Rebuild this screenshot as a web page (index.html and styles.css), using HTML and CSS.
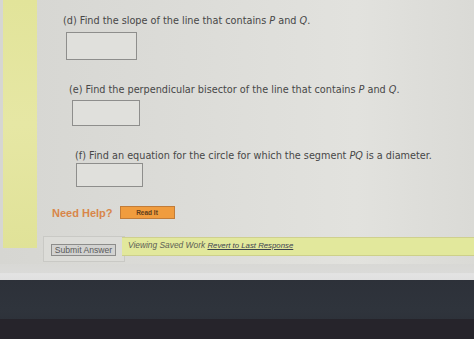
FILE: index.html
```html
<!DOCTYPE html>
<html>
<head>
<meta charset="utf-8">
<link rel="stylesheet" href="styles.css">
</head>
<body>
<div class="screen">
  <div class="upper">
    <div class="sidebar"></div>
    <div class="content">
      <div class="question q-d">
        <p class="prompt">(d) Find the slope of the line that contains <i>P</i> and <i>Q</i>.</p>
        <div class="answer a-d"></div>
      </div>
      <div class="question q-e">
        <p class="prompt">(e) Find the perpendicular bisector of the line that contains <i>P</i> and <i>Q</i>.</p>
        <div class="answer a-e"></div>
      </div>
      <div class="question q-f">
        <p class="prompt">(f) Find an equation for the circle for which the segment <i>PQ</i> is a diameter.</p>
        <div class="answer a-f"></div>
      </div>
      <div class="help">
        <span class="help-label">Need Help?</span>
        <span class="read-btn">Read It</span>
      </div>
      <div class="submit-row">
        <div class="submit-panel"><span class="submit-btn">Submit Answer</span></div>
        <div class="banner"><span class="saved">Viewing Saved Work</span> <span class="revert">Revert to Last Response</span></div>
      </div>
    </div>
  </div>
  <div class="strip"></div>
  <div class="bezel"><div class="bezel-low"></div></div>
</div>
</body>
</html>
```

FILE: styles.css
```css
* { box-sizing: border-box; }
html, body { margin: 0; padding: 0; }
body {
  width: 474px;
  height: 339px;
  overflow: hidden;
  background: #2c3139;
  font-family: "DejaVu Sans", Verdana, sans-serif;
}
.screen {
  display: flex;
  flex-direction: column;
  height: 339px;
}
.upper {
  display: flex;
  height: 264px;
  background: linear-gradient(90deg, #d6d6d2 0%, #dcdcd8 40%, #e2e2de 75%, #dadad6 100%);
}
.sidebar {
  width: 34px;
  height: 248px;
  margin-left: 3px;
  flex: none;
  background: linear-gradient(180deg, #e2e49a 0%, #e6e7a4 50%, #e0e298 100%);
}
.content {
  flex: 1;
  display: flex;
  flex-direction: column;
  padding-left: 6px;
  padding-top: 15px;
}
.question { display: flex; flex-direction: column; }
.prompt {
  margin: 0;
  font-size: 9.7px;
  line-height: 12px;
  color: #474747;
  white-space: nowrap;
}
.prompt i { font-style: italic; }
.answer {
  border: 1px solid #8e8e8c;
  background: #e0e0dc;
}
.q-d { margin-left: 20px; }
.a-d { width: 71px; height: 28px; margin: 5px 0 0 3px; }
.q-e { margin-left: 26px; margin-top: 24px; }
.a-e { width: 68px; height: 26px; margin: 4px 0 0 3px; }
.q-f { margin-left: 32px; margin-top: 24px; }
.a-f { width: 67px; height: 24px; margin: 1px 0 0 1px; }
.help {
  display: flex;
  align-items: center;
  gap: 7px;
  margin-left: 9px;
  margin-top: 19px;
}
.help-label {
  font-family: "Liberation Sans", Arial, sans-serif;
  font-weight: bold;
  font-size: 11px;
  color: #d8864a;
}
.read-btn {
  width: 55px;
  height: 13px;
  background: #f09c3e;
  border: 1px solid #c27c38;
  font-family: "Liberation Sans", Arial, sans-serif;
  font-weight: bold;
  font-size: 6.5px;
  line-height: 11px;
  text-align: center;
  color: #5e3c1c;
}
.submit-row {
  display: flex;
  align-items: flex-start;
  margin-top: 17px;
}
.submit-panel {
  width: 82px;
  height: 26px;
  padding: 7px 0 0 7px;
  border: 1px solid #c9c9c5;
  background: #dcdcd8;
  flex: none;
}
.submit-btn {
  display: block;
  width: 65px;
  height: 12px;
  border: 1px solid #8c8c8a;
  background: #d2d2d0;
  font-family: "Liberation Sans", Arial, sans-serif;
  font-size: 8.6px;
  line-height: 10px;
  color: #5a5a5a;
  text-align: center;
}
.banner {
  flex: 1;
  margin-left: -3px;
  margin-top: 1px;
  height: 19px;
  padding-left: 6px;
  background: #e2e89c;
  border-top: 1px solid #cfd08e;
  border-bottom: 1px solid #cdd08a;
  font-family: "Liberation Sans", Arial, sans-serif;
  font-style: italic;
  font-size: 8.4px;
  line-height: 14px;
  color: #5d5f56;
  white-space: nowrap;
}
.revert {
  font-size: 7.8px;
  color: #3c4350;
  text-decoration: underline;
}
.strip {
  height: 16px;
  background: linear-gradient(180deg, #d8d8d5 0%, #dadad8 55%, #e3e3e3 60%, #e0e0e0 100%);
}
.bezel {
  flex: 1;
  display: flex;
  flex-direction: column;
  justify-content: flex-end;
  background: linear-gradient(180deg, #2d3139 0%, #2f343c 50%, #2a2e36 100%);
}
.bezel-low {
  height: 20px;
  background: #26242b;
}
```
